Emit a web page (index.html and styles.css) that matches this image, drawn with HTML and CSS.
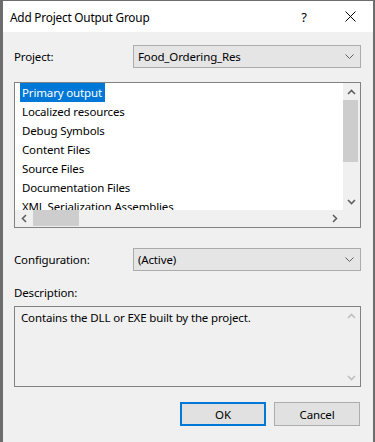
FILE: index.html
```html
<!DOCTYPE html>
<html lang="en">
<head>
  <meta charset="UTF-8">
  <meta name="viewport" content="width=device-width, initial-scale=1.0">
  <title>Add Project Output Group</title>
  <link rel="stylesheet" href="styles.css">
</head>
<body>
  <div class="window">
    <div class="titlebar">
      <span class="title">Add Project Output Group</span>
      <span class="caption-btn help">?</span>
      <span class="caption-btn close">
        <svg width="11" height="11" viewBox="0 0 11 11"><path d="M0.5 0.5 L10.5 10.5 M10.5 0.5 L0.5 10.5" stroke="#000" stroke-width="1" fill="none"/></svg>
      </span>
    </div>

    <div class="content">
      <div class="field-row">
        <label class="field-label">Project:</label>
        <div class="combo">
          <span>Food_Ordering_Res</span>
          <svg class="combo-arrow" width="9" height="5" viewBox="0 0 9 5"><polyline points="0.5,0.5 4.5,4.5 8.5,0.5" stroke="#606060" stroke-width="1" fill="none"/></svg>
        </div>
      </div>

      <div class="listbox">
        <ul class="items">
          <li class="selected">Primary output</li>
          <li>Localized resources</li>
          <li>Debug Symbols</li>
          <li>Content Files</li>
          <li>Source Files</li>
          <li>Documentation Files</li>
          <li>XML Serialization Assemblies</li>
        </ul>
        <div class="vscroll">
          <span class="arrow-btn">
            <svg width="9" height="6" viewBox="0 0 9 6"><polyline points="1,5 4.5,1.5 8,5" stroke="#606060" stroke-width="1.6" fill="none"/></svg>
          </span>
          <span class="vthumb"></span>
          <span class="vtrack"></span>
          <span class="arrow-btn">
            <svg width="9" height="6" viewBox="0 0 9 6"><polyline points="1,1 4.5,4.5 8,1" stroke="#606060" stroke-width="1.6" fill="none"/></svg>
          </span>
        </div>
        <div class="hscroll">
          <span class="arrow-btn">
            <svg width="6" height="9" viewBox="0 0 6 9"><polyline points="5,1 1.5,4.5 5,8" stroke="#606060" stroke-width="1.6" fill="none"/></svg>
          </span>
          <span class="hthumb"></span>
          <span class="htrack"></span>
          <span class="arrow-btn">
            <svg width="6" height="9" viewBox="0 0 6 9"><polyline points="1,1 4.5,4.5 1,8" stroke="#606060" stroke-width="1.6" fill="none"/></svg>
          </span>
        </div>
        <div class="corner"></div>
      </div>

      <div class="field-row config-row">
        <label class="field-label">Configuration:</label>
        <div class="combo">
          <span>(Active)</span>
          <svg class="combo-arrow" width="9" height="5" viewBox="0 0 9 5"><polyline points="0.5,0.5 4.5,4.5 8.5,0.5" stroke="#606060" stroke-width="1" fill="none"/></svg>
        </div>
      </div>

      <div class="desc-label">Description:</div>
      <div class="description">
        <p class="desc-text">Contains the DLL or EXE built by the project.</p>
        <div class="desc-scroll">
          <svg width="9" height="6" viewBox="0 0 9 6"><polyline points="1,5 4.5,1.5 8,5" stroke="#bfbfbf" stroke-width="1.6" fill="none"/></svg>
          <svg width="9" height="6" viewBox="0 0 9 6"><polyline points="1,1 4.5,4.5 8,1" stroke="#bfbfbf" stroke-width="1.6" fill="none"/></svg>
        </div>
      </div>

      <div class="buttons">
        <button class="btn default">OK</button>
        <button class="btn">Cancel</button>
      </div>
    </div>
  </div>
</body>
</html>
```

FILE: styles.css
```css
/* General */
* {
  box-sizing: border-box;
}

body {
  margin: 0;
  background-color: #6d6d6d;
  font-family: "Segoe UI", "Noto Sans", sans-serif;
  font-size: 11.5px;
  letter-spacing: -0.15px;
  color: #000;
}

.window {
  width: 375px;
  height: 442px;
  border-top: 1px solid #6d6d6d;
  border-left: 3px solid #6d6d6d;
  border-right: 2px solid #6d6d6d;
  background-color: #f0f0f0;
  overflow: hidden;
}

/* Title bar */
.titlebar {
  height: 31px;
  background-color: #fff;
  display: flex;
  align-items: center;
  padding-left: 7px;
}

.title {
  flex: 1;
  font-size: 11.8px;
  letter-spacing: -0.2px;
}

.caption-btn {
  width: 46px;
  height: 31px;
  display: flex;
  align-items: center;
  justify-content: center;
}

.help {
  font-size: 13px;
}

/* Content */
.content {
  padding: 13px 12px 0 11px;
}

.field-row {
  display: flex;
  align-items: center;
}

.field-label {
  width: 119px;
}

.combo {
  flex: 1;
  height: 23px;
  display: flex;
  align-items: center;
  justify-content: space-between;
  padding: 0 5px 0 4px;
  background-color: #e5e5e5;
  border: 1px solid #acacac;
}

.combo-arrow {
  margin-right: 1px;
}

.config-row {
  margin-top: 20px;
}

/* List box */
.listbox {
  margin-top: 14px;
  height: 146px;
  border: 1px solid #828282;
  background-color: #fff;
  display: grid;
  grid-template-columns: 1fr 17px;
  grid-template-rows: 1fr 17px;
}

.items {
  list-style: none;
  margin: 0;
  padding: 0 0 0 5px;
  overflow: hidden;
}

.items li {
  height: 19px;
  line-height: 19px;
  padding: 0 3px 0 2px;
  white-space: nowrap;
  width: max-content;
}

.items li.selected {
  background-color: #0078d7;
  color: #fff;
}

.vscroll {
  background-color: #f0f0f0;
  display: flex;
  flex-direction: column;
}

.hscroll {
  background-color: #f0f0f0;
  display: flex;
}

.arrow-btn {
  width: 17px;
  height: 17px;
  flex: none;
  display: flex;
  align-items: center;
  justify-content: center;
}

.vthumb {
  height: 62px;
  margin: 0 2px 0 0;
  background-color: #cdcdcd;
}

.vtrack,
.htrack {
  flex: 1;
}

.hthumb {
  width: 46px;
  margin: 0 0 1px 1px;
  background-color: #cdcdcd;
}

.corner {
  background-color: #f0f0f0;
}

/* Description */
.desc-label {
  margin-top: 14px;
  line-height: 16px;
}

.description {
  margin-top: 5px;
  height: 81px;
  border: 1px solid #828282;
  display: flex;
  justify-content: space-between;
}

.desc-text {
  margin: 0;
  padding: 3px 0 0 6px;
  line-height: 16px;
}

.desc-scroll {
  width: 17px;
  padding: 6px 0 5px;
  display: flex;
  flex-direction: column;
  align-items: center;
  justify-content: space-between;
}

/* Buttons */
.buttons {
  margin-top: 15px;
  display: flex;
  justify-content: flex-end;
  gap: 8px;
  padding-right: 1px;
}

.btn {
  width: 86px;
  height: 24px;
  font-family: inherit;
  font-size: 11.5px;
  letter-spacing: -0.15px;
  color: #000;
  background-color: #e1e1e1;
  border: 1px solid #adadad;
  padding: 0;
}

.btn.default {
  border: 2px solid #0078d7;
}
```
